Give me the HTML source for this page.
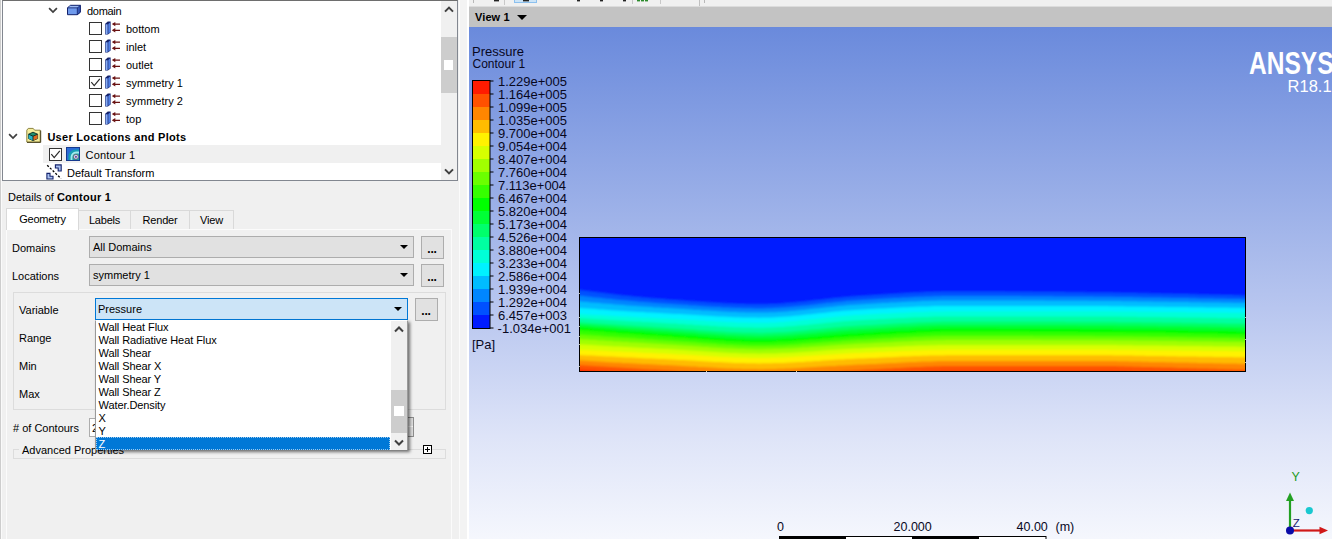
<!DOCTYPE html>
<html lang="en">
<head>
<meta charset="utf-8">
<title>CFD-Post - Contour 1</title>
<style>
*{box-sizing:border-box;margin:0;padding:0}
html,body{width:1332px;height:539px;overflow:hidden;background:#f0f0f0}
body{position:relative;font-family:"Liberation Sans",sans-serif;font-size:11px;color:#000;line-height:13px}
.abs{position:absolute}
.t{position:absolute;white-space:nowrap;line-height:13px;height:13px}
.b{font-weight:bold;letter-spacing:.25px}
/* tree */
#tree{position:absolute;left:2px;top:0;width:456px;height:181px;background:#fff;border:1px solid #828790;border-top-color:#6e6e6e}
.cb{position:absolute;width:13px;height:13px;border:1px solid #333;background:#fff}
.row-hl{position:absolute;left:43px;top:146px;width:397px;height:17px;background:#f0f0f0}
.sb{position:absolute;background:#f0f0f0}
.thumb{position:absolute;background:#cdcdcd}
/* details */
.tab{letter-spacing:-.2px;position:absolute;top:210px;height:19px;border:1px solid #d9d9d9;border-bottom:none;background:#f0f0f0;text-align:center;line-height:19px}
.tab.on{top:208px;height:22px;background:#fff;line-height:20px;z-index:2}
.combo{position:absolute;height:22px;background:#e1e1e1;border:1px solid #adadad;line-height:21px;padding-left:3px}
.btn{position:absolute;width:23px;height:23px;background:#e1e1e1;border:1px solid #adadad;text-align:center;line-height:24px;font-size:12px;font-weight:bold;letter-spacing:-.2px;padding-right:1px}
.arr{position:absolute;width:0;height:0;border-left:4px solid transparent;border-right:4px solid transparent;border-top:4px solid #000}
.grp{position:absolute;border:1px solid #dcdcdc}
.li{position:absolute;left:2.5px;letter-spacing:-.08px;white-space:nowrap;line-height:13px;height:13px}
</style>
</head>
<body>

<!-- ============ LEFT: outline tree ============ -->
<div id="tree"></div>
<div class="abs" style="left:0;top:0;width:460px;height:182px">
<div class="sb" style="left:441px;top:1px;width:16px;height:179px"></div>
<div class="thumb" style="left:441px;top:37px;width:16px;height:56px"></div>
<div class="abs" style="left:444px;top:60px;width:9px;height:10px;background:#fff"></div>
<svg class="abs" style="left:444px;top:6px" width="10" height="7" viewBox="0 0 10 7"><path d="M1 5.6 L5 1.6 L9 5.6" fill="none" stroke="#404040" stroke-width="2"/></svg>
<svg class="abs" style="left:444px;top:168px" width="10" height="7" viewBox="0 0 10 7"><path d="M1 1.4 L5 5.4 L9 1.4" fill="none" stroke="#404040" stroke-width="2"/></svg>
<div class="abs" style="left:43px;top:145px;width:398px;height:18px;background:#f0f0f0"></div>
<svg class="abs" style="left:47.7px;top:6.5px" width="10" height="7" viewBox="0 0 10 7"><path d="M1.1 1.1 L5 5 L8.9 1.1" fill="none" stroke="#404040" stroke-width="1.7"/></svg>
<svg class="abs" style="left:66px;top:4px" width="16" height="12" viewBox="0 0 16 12"><path d="M1.5 3.8 L4.5 1.3 H14.3 V8.2 L11.3 10.7 H1.5Z" fill="#6f9aec" stroke="#13226b" stroke-width="1" stroke-linejoin="round"/><path d="M11.3 3.8 L14.3 1.3 V8.2 L11.3 10.7Z" fill="#3558b8" stroke="#13226b" stroke-width=".8"/><path d="M1.5 3.8 H11.3" stroke="#13226b" stroke-width="1"/><path d="M2.2 3.2 L4.7 1.9 H13 L11 3.2Z" fill="#9dbcf5"/></svg>
<div class="t" style="left:87px;top:5px;letter-spacing:-.3px">domain</div>
<div class="cb" style="left:89px;top:22px"></div>
<svg class="abs" style="left:104px;top:21px" width="18" height="15" viewBox="0 0 18 15"><path d="M1.2 2.8 L3.8 .6 H6.6 V11.6 L3.9 13.6 H1.2Z" fill="#13226b"/><path d="M1.7 3.3 H3.6 V13.1 H1.7Z" fill="#86adf8"/><path d="M4.3 3 L6.1 1.5 V11.3 L4.3 12.7Z" fill="#4f7fe4"/><path d="M9.5 3.1 H16 M9.5 9.3 H16" stroke="#6a1212" stroke-width="1.2" fill="none"/><path d="M7.8 3.1 L11.3 .9 V5.3Z M7.8 9.3 L11.3 7.1 V11.5Z" fill="#6a1212"/></svg>
<div class="t" style="left:126px;top:23px">bottom</div>
<div class="cb" style="left:89px;top:40px"></div>
<svg class="abs" style="left:104px;top:39px" width="18" height="15" viewBox="0 0 18 15"><path d="M1.2 2.8 L3.8 .6 H6.6 V11.6 L3.9 13.6 H1.2Z" fill="#13226b"/><path d="M1.7 3.3 H3.6 V13.1 H1.7Z" fill="#86adf8"/><path d="M4.3 3 L6.1 1.5 V11.3 L4.3 12.7Z" fill="#4f7fe4"/><path d="M9.5 3.1 H16 M9.5 9.3 H16" stroke="#6a1212" stroke-width="1.2" fill="none"/><path d="M7.8 3.1 L11.3 .9 V5.3Z M7.8 9.3 L11.3 7.1 V11.5Z" fill="#6a1212"/></svg>
<div class="t" style="left:126px;top:41px">inlet</div>
<div class="cb" style="left:89px;top:58px"></div>
<svg class="abs" style="left:104px;top:57px" width="18" height="15" viewBox="0 0 18 15"><path d="M1.2 2.8 L3.8 .6 H6.6 V11.6 L3.9 13.6 H1.2Z" fill="#13226b"/><path d="M1.7 3.3 H3.6 V13.1 H1.7Z" fill="#86adf8"/><path d="M4.3 3 L6.1 1.5 V11.3 L4.3 12.7Z" fill="#4f7fe4"/><path d="M9.5 3.1 H16 M9.5 9.3 H16" stroke="#6a1212" stroke-width="1.2" fill="none"/><path d="M7.8 3.1 L11.3 .9 V5.3Z M7.8 9.3 L11.3 7.1 V11.5Z" fill="#6a1212"/></svg>
<div class="t" style="left:126px;top:59px">outlet</div>
<div class="cb" style="left:89px;top:76px"><svg width="11" height="11" viewBox="0 0 11 11" style="display:block"><path d="M1.3 5.2 L4.2 8.6 L9.8 1.8" fill="none" stroke="#2a2a2a" stroke-width="1.2"/></svg></div>
<svg class="abs" style="left:104px;top:75px" width="18" height="15" viewBox="0 0 18 15"><path d="M1.2 2.8 L3.8 .6 H6.6 V11.6 L3.9 13.6 H1.2Z" fill="#13226b"/><path d="M1.7 3.3 H3.6 V13.1 H1.7Z" fill="#86adf8"/><path d="M4.3 3 L6.1 1.5 V11.3 L4.3 12.7Z" fill="#4f7fe4"/><path d="M9.5 3.1 H16 M9.5 9.3 H16" stroke="#6a1212" stroke-width="1.2" fill="none"/><path d="M7.8 3.1 L11.3 .9 V5.3Z M7.8 9.3 L11.3 7.1 V11.5Z" fill="#6a1212"/></svg>
<div class="t" style="left:126px;top:77px">symmetry 1</div>
<div class="cb" style="left:89px;top:94px"></div>
<svg class="abs" style="left:104px;top:93px" width="18" height="15" viewBox="0 0 18 15"><path d="M1.2 2.8 L3.8 .6 H6.6 V11.6 L3.9 13.6 H1.2Z" fill="#13226b"/><path d="M1.7 3.3 H3.6 V13.1 H1.7Z" fill="#86adf8"/><path d="M4.3 3 L6.1 1.5 V11.3 L4.3 12.7Z" fill="#4f7fe4"/><path d="M9.5 3.1 H16 M9.5 9.3 H16" stroke="#6a1212" stroke-width="1.2" fill="none"/><path d="M7.8 3.1 L11.3 .9 V5.3Z M7.8 9.3 L11.3 7.1 V11.5Z" fill="#6a1212"/></svg>
<div class="t" style="left:126px;top:95px">symmetry 2</div>
<div class="cb" style="left:89px;top:112px"></div>
<svg class="abs" style="left:104px;top:111px" width="18" height="15" viewBox="0 0 18 15"><path d="M1.2 2.8 L3.8 .6 H6.6 V11.6 L3.9 13.6 H1.2Z" fill="#13226b"/><path d="M1.7 3.3 H3.6 V13.1 H1.7Z" fill="#86adf8"/><path d="M4.3 3 L6.1 1.5 V11.3 L4.3 12.7Z" fill="#4f7fe4"/><path d="M9.5 3.1 H16 M9.5 9.3 H16" stroke="#6a1212" stroke-width="1.2" fill="none"/><path d="M7.8 3.1 L11.3 .9 V5.3Z M7.8 9.3 L11.3 7.1 V11.5Z" fill="#6a1212"/></svg>
<div class="t" style="left:126px;top:113px">top</div>
<svg class="abs" style="left:7.8px;top:132.5px" width="10" height="7" viewBox="0 0 10 7"><path d="M1.1 1.1 L5 5 L8.9 1.1" fill="none" stroke="#404040" stroke-width="1.7"/></svg>
<svg class="abs" style="left:26px;top:127px" width="16" height="17" viewBox="0 0 16 17"><path d="M.8 3.2 L2.2 1.4 H7.2 L8.6 3.2 H14.2 V15 H.8Z" fill="#f6ee9c" stroke="#8c8440" stroke-width="1"/><path d="M1 15.4 H14.7 V3.6" fill="none" stroke="#4a4420" stroke-width="1"/><path d="M2.6 7.2 L7 5.2 L11.6 7.2 V11.6 L7 13.6 L2.6 11.6Z" fill="#1f8f70" stroke="#0c2a22" stroke-width=".9"/><path d="M7 9.2 L11.6 7.2 V11.6 L7 13.6Z" fill="#e06a20"/><path d="M2.6 7.2 L7 9.2 V13.6 L2.6 11.6Z" fill="#28b4c8"/><path d="M2.6 7.2 L7 9.2 L11.6 7.2 M7 9.2 V13.6" fill="none" stroke="#0c2a22" stroke-width=".9"/></svg>
<div class="t b" style="left:47.4px;top:131px;letter-spacing:.29px">User Locations and Plots</div>
<div class="cb" style="left:49px;top:148px"><svg width="11" height="11" viewBox="0 0 11 11" style="display:block"><path d="M1.3 5.2 L4.2 8.6 L9.8 1.8" fill="none" stroke="#2a2a2a" stroke-width="1.2"/></svg></div>
<svg class="abs" style="left:66px;top:147px" width="14" height="14" viewBox="0 0 14 14"><rect x=".5" y=".5" width="13" height="13" fill="#2b6cd6" stroke="#163a8e"/><path d="M2.4 13 V9.6 A7.2 7.2 0 0 1 9.6 2.4 H13 V13Z" fill="#179fb4"/><path d="M4.6 13 V10 A5.4 5.4 0 0 1 10 4.6 H13 V13Z" fill="#a4ecec"/><path d="M6.4 13 V10.4 A4 4 0 0 1 10.4 6.4 H13 V13Z" fill="#1da2a8"/><circle cx="9.9" cy="9.8" r="2.5" fill="#dcdfe8" stroke="#55586a" stroke-width=".8"/><circle cx="9.9" cy="9.8" r="1.1" fill="#6a48b0"/></svg>
<div class="t" style="left:85.6px;top:149px;letter-spacing:.15px">Contour 1</div>
<svg class="abs" style="left:46px;top:164px" width="17" height="16" viewBox="0 0 17 16"><path d="M9.4 .9 H15.2 V7 H12.2 V4 H9.4Z" fill="#a9c0f0" stroke="#13226b" stroke-width="1.1"/><path d="M.9 9.4 H4 V12.2 H7 V15 H.9Z" fill="#a9c0f0" stroke="#13226b" stroke-width="1.1"/><path d="M1.2 1.2 L15 14.6" stroke="#000" stroke-width="1.3" stroke-dasharray="2.2 1.6"/></svg>
<div class="t" style="left:67px;top:167px">Default Transform</div>
</div>


<!-- ============ LEFT: details ============ -->
<div class="abs" style="left:0;top:0;width:1px;height:539px;background:#cdcdcd"></div>
<div class="abs" style="left:1px;top:0;width:1px;height:539px;background:#fafafa"></div>
<div class="abs" style="left:459px;top:0;width:1px;height:539px;background:#fbfbfb"></div>
<div class="abs" style="left:460px;top:0;width:7px;height:539px;background:#f3f3f3"></div>
<div class="abs" style="left:467px;top:0;width:2px;height:539px;background:#fff"></div>
<div class="t" style="left:8px;top:191px">Details of <span class="b">Contour 1</span></div>

<!-- tab pane -->
<div class="abs" style="left:6px;top:229px;width:446px;height:320px;border:1px solid #fbfbfb"></div>
<div class="tab on" style="left:6px;width:73px">Geometry</div>
<div class="tab" style="left:78px;width:53px">Labels</div>
<div class="tab" style="left:130px;width:60px">Render</div>
<div class="tab" style="left:189px;width:45px">View</div>

<div class="t" style="left:12px;top:242px">Domains</div>
<div class="combo" style="left:89px;top:236px;width:325px">All Domains</div>
<div class="arr" style="left:400px;top:245px"></div>
<div class="btn" style="left:421px;top:236px">...</div>

<div class="t" style="left:12px;top:270px">Locations</div>
<div class="combo" style="left:89px;top:264px;width:325px">symmetry 1</div>
<div class="arr" style="left:400px;top:273px"></div>
<div class="btn" style="left:421px;top:264px">...</div>

<div class="grp" style="left:13px;top:292px;width:433px;height:118px"></div>
<div class="t" style="left:19px;top:304px">Variable</div>
<div class="t" style="left:19px;top:332px">Range</div>
<div class="t" style="left:19px;top:360px">Min</div>
<div class="t" style="left:19px;top:388px">Max</div>
<div class="combo" style="left:95px;top:298px;width:313px;background:#cce4f7;border-color:#0078d7;padding-left:2px">Pressure</div>
<div class="arr" style="left:394px;top:307px"></div>
<div class="btn" style="left:415px;top:298px">...</div>

<div class="t" style="left:13px;top:422px"># of Contours</div>
<div class="abs" style="left:89px;top:418px;width:325px;height:19px;background:#fff;border:1px solid #adadad"></div>
<div class="abs" style="left:407px;top:417px;width:7px;height:20px;background:#dedede;border:1px solid #8c8c8c"></div>
<div class="abs" style="left:408px;top:426px;width:5px;height:1px;background:#f6f6f6"></div>
<div class="t" style="left:92px;top:422px">20</div>

<div class="grp" style="left:13px;top:449px;width:433px;height:10px"></div>
<div class="t" style="left:19px;top:444px;background:#f0f0f0;padding:0 3px">Advanced Properties</div>
<div class="abs" style="left:423px;top:445px;width:9px;height:9px;border:1px solid #000;background:#fff"></div>
<div class="abs" style="left:425px;top:449px;width:5px;height:1px;background:#000"></div>
<div class="abs" style="left:427px;top:447px;width:1px;height:5px;background:#000"></div>

<!-- dropdown list -->
<div class="abs" style="left:95px;top:320px;width:313px;height:130px;background:#fff;border:1px solid #9a9a9a;border-top-color:#fff;border-bottom:none;box-shadow:2px 2px 3px rgba(0,0,0,.55);z-index:5">
  <div class="li" style="top:0px">Wall Heat Flux</div>
  <div class="li" style="top:13px">Wall Radiative Heat Flux</div>
  <div class="li" style="top:26px">Wall Shear</div>
  <div class="li" style="top:39px">Wall Shear X</div>
  <div class="li" style="top:52px">Wall Shear Y</div>
  <div class="li" style="top:65px">Wall Shear Z</div>
  <div class="li" style="top:78px">Water.Density</div>
  <div class="li" style="top:91px">X</div>
  <div class="li" style="top:104px">Y</div>
  <div class="abs" style="left:0;top:116px;width:294px;height:13px;background:#0078d7;outline:1px dotted #9ccbf0;outline-offset:-1px"></div>
  <div class="li" style="top:117px;color:#fff">Z</div>
  <div class="sb" style="left:295px;top:0;width:16px;height:129px"></div>
  <div class="thumb" style="left:295px;top:69px;width:16px;height:43px"></div>
  <div class="abs" style="left:298px;top:85px;width:10px;height:10px;background:#fff"></div>
  <svg class="abs" style="left:298px;top:5px" width="10" height="7" viewBox="0 0 10 7"><path d="M1 5.5 L5 1.5 L9 5.5" fill="none" stroke="#404040" stroke-width="2"/></svg>
  <svg class="abs" style="left:298px;top:118px" width="10" height="7" viewBox="0 0 10 7"><path d="M1 1.5 L5 5.5 L9 1.5" fill="none" stroke="#404040" stroke-width="2"/></svg>
</div>

<!-- ============ RIGHT: viewer ============ -->
<!--VIEWER-START-->
<div class="abs" style="left:469px;top:6px;width:863px;height:1px;background:#dcdcdc"></div>
<div class="abs" style="left:469px;top:7px;width:863px;height:20px;background:#c3c3c3"></div>
<div class="t b" style="left:475px;top:11px;letter-spacing:.1px">View 1</div>
<div class="arr" style="left:517px;top:15px;border-left-width:5px;border-right-width:5px;border-top-width:5px"></div>
<svg class="abs" style="left:469px;top:27px" width="863" height="512" viewBox="469 27 863 512" font-family="Liberation Sans, sans-serif">
<defs><linearGradient id="bg" x1="0" y1="0" x2="0" y2="1"><stop offset="0" stop-color="#6a8adc"/><stop offset=".55" stop-color="#b8c6ef"/><stop offset=".8" stop-color="#dee4f8"/><stop offset="1" stop-color="#f5f7fd"/></linearGradient><clipPath id="pc"><rect x="580" y="238" width="665" height="133"/></clipPath><filter id="bl" x="-2%" y="-10%" width="104%" height="120%"><feGaussianBlur stdDeviation="0.6 1.0"/></filter></defs>
<rect x="469" y="27" width="863" height="512" fill="url(#bg)"/>
<text x="472" y="55.9" font-size="13" fill="#08081e">Pressure</text>
<text x="472.5" y="68" font-size="12" fill="#08081e">Contour 1</text>
<rect x="473" y="81" width="17" height="13" fill="#ff1b00"/>
<rect x="473" y="94" width="17" height="13" fill="#ff5100"/>
<rect x="473" y="107" width="17" height="13" fill="#ff8600"/>
<rect x="473" y="120" width="17" height="13" fill="#ffbc00"/>
<rect x="473" y="133" width="17" height="13" fill="#fff200"/>
<rect x="473" y="146" width="17" height="13" fill="#d7ff00"/>
<rect x="473" y="159" width="17" height="13" fill="#a1ff00"/>
<rect x="473" y="172" width="17" height="13" fill="#6bff00"/>
<rect x="473" y="185" width="17" height="13" fill="#36ff00"/>
<rect x="473" y="198" width="17" height="13" fill="#00ff00"/>
<rect x="473" y="211" width="17" height="13" fill="#00ff36"/>
<rect x="473" y="224" width="17" height="13" fill="#00ff6b"/>
<rect x="473" y="237" width="17" height="13" fill="#00ffa1"/>
<rect x="473" y="250" width="17" height="13" fill="#00ffd7"/>
<rect x="473" y="263" width="17" height="13" fill="#00f2ff"/>
<rect x="473" y="276" width="17" height="13" fill="#00bcff"/>
<rect x="473" y="289" width="17" height="13" fill="#0086ff"/>
<rect x="473" y="302" width="17" height="13" fill="#0051ff"/>
<rect x="473" y="315" width="17" height="13" fill="#001bff"/>
<rect x="472.5" y="80.5" width="17.5" height="248" fill="none" stroke="#000" stroke-width="1"/>
<rect x="490" y="80.5" width="3.5" height="1" fill="#000"/>
<text x="498" y="85.7" font-size="13" fill="#08081e">1.229e+005</text>
<rect x="490" y="93.5" width="3.5" height="1" fill="#000"/>
<text x="498" y="98.7" font-size="13" fill="#08081e">1.164e+005</text>
<rect x="490" y="106.5" width="3.5" height="1" fill="#000"/>
<text x="498" y="111.7" font-size="13" fill="#08081e">1.099e+005</text>
<rect x="490" y="119.5" width="3.5" height="1" fill="#000"/>
<text x="498" y="124.7" font-size="13" fill="#08081e">1.035e+005</text>
<rect x="490" y="132.5" width="3.5" height="1" fill="#000"/>
<text x="498" y="137.7" font-size="13" fill="#08081e">9.700e+004</text>
<rect x="490" y="145.5" width="3.5" height="1" fill="#000"/>
<text x="498" y="150.7" font-size="13" fill="#08081e">9.054e+004</text>
<rect x="490" y="158.5" width="3.5" height="1" fill="#000"/>
<text x="498" y="163.7" font-size="13" fill="#08081e">8.407e+004</text>
<rect x="490" y="171.5" width="3.5" height="1" fill="#000"/>
<text x="498" y="176.7" font-size="13" fill="#08081e">7.760e+004</text>
<rect x="490" y="184.5" width="3.5" height="1" fill="#000"/>
<text x="498" y="189.7" font-size="13" fill="#08081e">7.113e+004</text>
<rect x="490" y="197.5" width="3.5" height="1" fill="#000"/>
<text x="498" y="202.7" font-size="13" fill="#08081e">6.467e+004</text>
<rect x="490" y="210.5" width="3.5" height="1" fill="#000"/>
<text x="498" y="215.7" font-size="13" fill="#08081e">5.820e+004</text>
<rect x="490" y="223.5" width="3.5" height="1" fill="#000"/>
<text x="498" y="228.7" font-size="13" fill="#08081e">5.173e+004</text>
<rect x="490" y="236.5" width="3.5" height="1" fill="#000"/>
<text x="498" y="241.7" font-size="13" fill="#08081e">4.526e+004</text>
<rect x="490" y="249.5" width="3.5" height="1" fill="#000"/>
<text x="498" y="254.7" font-size="13" fill="#08081e">3.880e+004</text>
<rect x="490" y="262.5" width="3.5" height="1" fill="#000"/>
<text x="498" y="267.7" font-size="13" fill="#08081e">3.233e+004</text>
<rect x="490" y="275.5" width="3.5" height="1" fill="#000"/>
<text x="498" y="280.7" font-size="13" fill="#08081e">2.586e+004</text>
<rect x="490" y="288.5" width="3.5" height="1" fill="#000"/>
<text x="498" y="293.7" font-size="13" fill="#08081e">1.939e+004</text>
<rect x="490" y="301.5" width="3.5" height="1" fill="#000"/>
<text x="498" y="306.7" font-size="13" fill="#08081e">1.292e+004</text>
<rect x="490" y="314.5" width="3.5" height="1" fill="#000"/>
<text x="498" y="319.7" font-size="13" fill="#08081e">6.457e+003</text>
<rect x="490" y="327.5" width="3.5" height="1" fill="#000"/>
<text x="497.6" y="332.7" font-size="13" fill="#08081e">-1.034e+001</text>
<text x="472" y="349" font-size="13" fill="#08081e">[Pa]</text>
<g clip-path="url(#pc)"><g filter="url(#bl)">
<rect x="560" y="220" width="700" height="170" fill="#001bff"/>
<polygon fill="#0051ff" points="560,290.0 579,290.0 583,290.5 587,291.1 591,291.6 595,292.1 599,292.6 603,293.1 607,293.6 611,294.0 615,294.5 619,295.0 623,295.4 627,295.8 631,296.3 635,296.7 639,297.1 643,297.4 647,297.8 651,298.2 655,298.5 659,298.8 663,299.1 667,299.4 671,299.7 675,300.0 679,300.3 683,300.6 687,300.9 691,301.2 695,301.4 699,301.7 703,302.0 707,302.3 711,302.5 715,302.8 719,303.0 723,303.2 727,303.4 731,303.6 735,303.8 739,303.9 743,304.0 747,304.2 751,304.2 755,304.3 759,304.3 763,304.3 767,304.2 771,304.1 775,303.9 779,303.7 783,303.4 787,303.1 791,302.8 795,302.4 799,302.1 803,301.7 807,301.2 811,300.8 815,300.3 819,299.9 823,299.5 827,299.0 831,298.6 835,298.1 839,297.7 843,297.3 847,297.0 851,296.6 855,296.3 859,296.1 863,295.8 867,295.6 871,295.3 875,295.1 879,294.8 883,294.5 887,294.3 891,294.0 895,293.8 899,293.5 903,293.3 907,293.1 911,292.8 915,292.6 919,292.4 923,292.3 927,292.1 931,291.9 935,291.8 939,291.7 943,291.6 947,291.6 951,291.5 955,291.5 959,291.5 963,291.5 967,291.5 971,291.5 975,291.5 979,291.5 983,291.6 987,291.6 991,291.6 995,291.6 999,291.6 1003,291.6 1007,291.7 1011,291.7 1015,291.7 1019,291.7 1023,291.8 1027,291.8 1031,291.8 1035,291.9 1039,291.9 1043,291.9 1047,292.0 1051,292.0 1055,292.0 1059,292.1 1063,292.1 1067,292.2 1071,292.2 1075,292.2 1079,292.3 1083,292.3 1087,292.4 1091,292.4 1095,292.4 1099,292.5 1103,292.5 1107,292.6 1111,292.6 1115,292.7 1119,292.8 1123,292.9 1127,292.9 1131,293.0 1135,293.1 1139,293.2 1143,293.3 1147,293.3 1151,293.4 1155,293.5 1159,293.6 1163,293.7 1167,293.7 1171,293.8 1175,293.9 1179,294.0 1183,294.1 1187,294.1 1191,294.2 1195,294.3 1199,294.4 1203,294.5 1207,294.6 1211,294.7 1215,294.8 1219,294.8 1223,294.9 1227,295.0 1231,295.1 1235,295.2 1239,295.3 1243,295.4 1247,295.5 1262,295.5 1262,395 560,395"/>
<polygon fill="#0086ff" points="560,295.7 579,295.7 583,296.1 587,296.6 591,297.0 595,297.4 599,297.8 603,298.3 607,298.7 611,299.1 615,299.5 619,299.9 623,300.2 627,300.6 631,301.0 635,301.3 639,301.7 643,302.0 647,302.3 651,302.6 655,302.9 659,303.2 663,303.5 667,303.8 671,304.0 675,304.3 679,304.6 683,304.8 687,305.1 691,305.4 695,305.6 699,305.9 703,306.2 707,306.4 711,306.7 715,306.9 719,307.1 723,307.4 727,307.6 731,307.7 735,307.9 739,308.0 743,308.2 747,308.3 751,308.3 755,308.4 759,308.4 763,308.4 767,308.3 771,308.2 775,308.0 779,307.8 783,307.5 787,307.3 791,306.9 795,306.6 799,306.2 803,305.8 807,305.4 811,304.9 815,304.5 819,304.0 823,303.6 827,303.1 831,302.7 835,302.3 839,301.9 843,301.5 847,301.1 851,300.8 855,300.5 859,300.3 863,300.0 867,299.8 871,299.5 875,299.3 879,299.1 883,298.8 887,298.6 891,298.3 895,298.1 899,297.9 903,297.6 907,297.4 911,297.2 915,297.0 919,296.8 923,296.7 927,296.5 931,296.4 935,296.3 939,296.2 943,296.1 947,296.0 951,296.0 955,296.0 959,296.0 963,296.0 967,296.0 971,296.0 975,296.0 979,296.0 983,296.0 987,296.0 991,296.0 995,296.0 999,296.1 1003,296.1 1007,296.1 1011,296.1 1015,296.1 1019,296.1 1023,296.2 1027,296.2 1031,296.2 1035,296.2 1039,296.3 1043,296.3 1047,296.3 1051,296.3 1055,296.4 1059,296.4 1063,296.4 1067,296.4 1071,296.5 1075,296.5 1079,296.5 1083,296.6 1087,296.6 1091,296.6 1095,296.7 1099,296.7 1103,296.7 1107,296.8 1111,296.8 1115,296.9 1119,296.9 1123,297.0 1127,297.1 1131,297.1 1135,297.2 1139,297.3 1143,297.4 1147,297.4 1151,297.5 1155,297.6 1159,297.6 1163,297.7 1167,297.8 1171,297.9 1175,297.9 1179,298.0 1183,298.1 1187,298.1 1191,298.2 1195,298.3 1199,298.4 1203,298.4 1207,298.5 1211,298.6 1215,298.7 1219,298.7 1223,298.8 1227,298.9 1231,299.0 1235,299.1 1239,299.1 1243,299.2 1247,299.3 1262,299.3 1262,395 560,395"/>
<polygon fill="#00bcff" points="560,301.3 579,301.3 583,301.7 587,302.1 591,302.4 595,302.8 599,303.1 603,303.5 607,303.8 611,304.1 615,304.4 619,304.8 623,305.1 627,305.4 631,305.7 635,306.0 639,306.3 643,306.6 647,306.8 651,307.1 655,307.4 659,307.6 663,307.9 667,308.1 671,308.3 675,308.6 679,308.8 683,309.1 687,309.3 691,309.6 695,309.9 699,310.1 703,310.4 707,310.6 711,310.8 715,311.1 719,311.3 723,311.5 727,311.7 731,311.9 735,312.0 739,312.2 743,312.3 747,312.4 751,312.5 755,312.5 759,312.5 763,312.5 767,312.5 771,312.3 775,312.2 779,311.9 783,311.7 787,311.4 791,311.0 795,310.7 799,310.3 803,309.9 807,309.5 811,309.0 815,308.6 819,308.2 823,307.7 827,307.3 831,306.9 835,306.4 839,306.0 843,305.7 847,305.3 851,305.0 855,304.7 859,304.5 863,304.2 867,304.0 871,303.8 875,303.6 879,303.3 883,303.1 887,302.9 891,302.6 895,302.4 899,302.2 903,302.0 907,301.8 911,301.6 915,301.4 919,301.2 923,301.1 927,300.9 931,300.8 935,300.7 939,300.6 943,300.5 947,300.5 951,300.4 955,300.4 959,300.4 963,300.4 967,300.4 971,300.4 975,300.4 979,300.5 983,300.5 987,300.5 991,300.5 995,300.5 999,300.5 1003,300.5 1007,300.5 1011,300.5 1015,300.5 1019,300.5 1023,300.6 1027,300.6 1031,300.6 1035,300.6 1039,300.6 1043,300.6 1047,300.7 1051,300.7 1055,300.7 1059,300.7 1063,300.7 1067,300.7 1071,300.8 1075,300.8 1079,300.8 1083,300.8 1087,300.8 1091,300.9 1095,300.9 1099,300.9 1103,300.9 1107,301.0 1111,301.0 1115,301.0 1119,301.1 1123,301.2 1127,301.2 1131,301.3 1135,301.3 1139,301.4 1143,301.5 1147,301.5 1151,301.6 1155,301.7 1159,301.7 1163,301.8 1167,301.8 1171,301.9 1175,302.0 1179,302.0 1183,302.1 1187,302.1 1191,302.2 1195,302.3 1199,302.3 1203,302.4 1207,302.4 1211,302.5 1215,302.6 1219,302.6 1223,302.7 1227,302.8 1231,302.8 1235,302.9 1239,303.0 1243,303.0 1247,303.1 1262,303.1 1262,395 560,395"/>
<polygon fill="#00f2ff" points="560,308.0 579,308.0 583,308.3 587,308.6 591,308.8 595,309.1 599,309.4 603,309.6 607,309.9 611,310.2 615,310.4 619,310.7 623,310.9 627,311.2 631,311.4 635,311.7 639,311.9 643,312.1 647,312.4 651,312.6 655,312.8 659,313.0 663,313.2 667,313.4 671,313.7 675,313.9 679,314.1 683,314.3 687,314.6 691,314.8 695,315.1 699,315.3 703,315.5 707,315.8 711,316.0 715,316.2 719,316.4 723,316.6 727,316.8 731,317.0 735,317.2 739,317.3 743,317.4 747,317.5 751,317.6 755,317.6 759,317.7 763,317.6 767,317.6 771,317.4 775,317.3 779,317.1 783,316.8 787,316.5 791,316.2 795,315.8 799,315.4 803,315.0 807,314.6 811,314.2 815,313.7 819,313.3 823,312.9 827,312.4 831,312.0 835,311.6 839,311.2 843,310.8 847,310.5 851,310.2 855,309.9 859,309.7 863,309.4 867,309.2 871,309.0 875,308.8 879,308.6 883,308.4 887,308.2 891,307.9 895,307.7 899,307.5 903,307.3 907,307.2 911,307.0 915,306.8 919,306.6 923,306.5 927,306.4 931,306.3 935,306.1 939,306.1 943,306.0 947,305.9 951,305.9 955,305.9 959,305.9 963,305.9 967,305.9 971,305.9 975,305.9 979,305.9 983,305.9 987,305.9 991,305.9 995,305.9 999,305.9 1003,305.9 1007,305.9 1011,305.9 1015,305.9 1019,305.9 1023,306.0 1027,306.0 1031,306.0 1035,306.0 1039,306.0 1043,306.0 1047,306.0 1051,306.0 1055,306.0 1059,306.0 1063,306.0 1067,306.0 1071,306.0 1075,306.0 1079,306.1 1083,306.1 1087,306.1 1091,306.1 1095,306.1 1099,306.1 1103,306.1 1107,306.1 1111,306.2 1115,306.2 1119,306.2 1123,306.3 1127,306.4 1131,306.4 1135,306.5 1139,306.5 1143,306.6 1147,306.6 1151,306.7 1155,306.7 1159,306.8 1163,306.8 1167,306.9 1171,306.9 1175,307.0 1179,307.0 1183,307.1 1187,307.1 1191,307.2 1195,307.2 1199,307.3 1203,307.3 1207,307.4 1211,307.4 1215,307.5 1219,307.5 1223,307.6 1227,307.6 1231,307.7 1235,307.7 1239,307.8 1243,307.8 1247,307.9 1262,307.9 1262,395 560,395"/>
<polygon fill="#00ffd7" points="560,314.0 579,314.0 583,314.2 587,314.5 591,314.7 595,314.9 599,315.1 603,315.3 607,315.5 611,315.8 615,316.0 619,316.2 623,316.4 627,316.6 631,316.8 635,317.0 639,317.2 643,317.4 647,317.6 651,317.8 655,318.0 659,318.2 663,318.4 667,318.6 671,318.8 675,319.0 679,319.2 683,319.4 687,319.7 691,319.9 695,320.1 699,320.4 703,320.6 707,320.9 711,321.1 715,321.3 719,321.5 723,321.7 727,321.9 731,322.1 735,322.2 739,322.4 743,322.5 747,322.6 751,322.7 755,322.7 759,322.7 763,322.7 767,322.7 771,322.5 775,322.4 779,322.1 783,321.9 787,321.6 791,321.3 795,320.9 799,320.5 803,320.1 807,319.7 811,319.3 815,318.9 819,318.4 823,318.0 827,317.6 831,317.2 835,316.8 839,316.4 843,316.0 847,315.7 851,315.4 855,315.1 859,314.9 863,314.7 867,314.5 871,314.3 875,314.1 879,313.8 883,313.6 887,313.4 891,313.2 895,313.0 899,312.8 903,312.7 907,312.5 911,312.3 915,312.1 919,312.0 923,311.9 927,311.7 931,311.6 935,311.5 939,311.4 943,311.4 947,311.3 951,311.3 955,311.3 959,311.3 963,311.3 967,311.3 971,311.3 975,311.3 979,311.3 983,311.3 987,311.3 991,311.3 995,311.3 999,311.3 1003,311.3 1007,311.3 1011,311.3 1015,311.3 1019,311.3 1023,311.3 1027,311.3 1031,311.3 1035,311.3 1039,311.3 1043,311.3 1047,311.3 1051,311.3 1055,311.3 1059,311.3 1063,311.3 1067,311.3 1071,311.3 1075,311.3 1079,311.3 1083,311.3 1087,311.3 1091,311.3 1095,311.3 1099,311.3 1103,311.3 1107,311.3 1111,311.3 1115,311.4 1119,311.4 1123,311.5 1127,311.5 1131,311.6 1135,311.6 1139,311.7 1143,311.7 1147,311.8 1151,311.8 1155,311.9 1159,311.9 1163,311.9 1167,312.0 1171,312.0 1175,312.1 1179,312.1 1183,312.1 1187,312.2 1191,312.2 1195,312.3 1199,312.3 1203,312.4 1207,312.4 1211,312.5 1215,312.5 1219,312.5 1223,312.6 1227,312.6 1231,312.7 1235,312.7 1239,312.8 1243,312.8 1247,312.9 1262,312.9 1262,395 560,395"/>
<polygon fill="#00ffa1" points="560,318.1 579,318.1 583,318.3 587,318.6 591,318.8 595,319.1 599,319.3 603,319.5 607,319.8 611,320.0 615,320.3 619,320.5 623,320.7 627,321.0 631,321.2 635,321.4 639,321.6 643,321.9 647,322.1 651,322.3 655,322.5 659,322.7 663,323.0 667,323.2 671,323.4 675,323.6 679,323.9 683,324.1 687,324.4 691,324.6 695,324.9 699,325.1 703,325.4 707,325.6 711,325.9 715,326.1 719,326.4 723,326.6 727,326.8 731,327.0 735,327.2 739,327.3 743,327.4 747,327.5 751,327.6 755,327.7 759,327.7 763,327.7 767,327.6 771,327.5 775,327.3 779,327.1 783,326.9 787,326.6 791,326.3 795,326.0 799,325.6 803,325.3 807,324.9 811,324.5 815,324.1 819,323.7 823,323.2 827,322.8 831,322.4 835,322.1 839,321.7 843,321.3 847,321.0 851,320.7 855,320.4 859,320.2 863,320.0 867,319.8 871,319.6 875,319.4 879,319.1 883,318.9 887,318.7 891,318.5 895,318.3 899,318.1 903,317.9 907,317.7 911,317.5 915,317.3 919,317.2 923,317.0 927,316.9 931,316.8 935,316.6 939,316.6 943,316.5 947,316.4 951,316.4 955,316.4 959,316.4 963,316.4 967,316.4 971,316.4 975,316.4 979,316.4 983,316.4 987,316.4 991,316.4 995,316.4 999,316.4 1003,316.4 1007,316.4 1011,316.4 1015,316.4 1019,316.4 1023,316.4 1027,316.4 1031,316.4 1035,316.4 1039,316.4 1043,316.4 1047,316.4 1051,316.5 1055,316.5 1059,316.5 1063,316.5 1067,316.5 1071,316.5 1075,316.5 1079,316.5 1083,316.5 1087,316.5 1091,316.5 1095,316.5 1099,316.5 1103,316.5 1107,316.5 1111,316.6 1115,316.6 1119,316.6 1123,316.7 1127,316.7 1131,316.8 1135,316.8 1139,316.9 1143,316.9 1147,317.0 1151,317.0 1155,317.1 1159,317.1 1163,317.2 1167,317.2 1171,317.3 1175,317.3 1179,317.4 1183,317.4 1187,317.5 1191,317.5 1195,317.6 1199,317.6 1203,317.7 1207,317.7 1211,317.8 1215,317.8 1219,317.9 1223,317.9 1227,318.0 1231,318.0 1235,318.1 1239,318.2 1243,318.2 1247,318.3 1262,318.3 1262,395 560,395"/>
<polygon fill="#00ff6b" points="560,322.1 579,322.1 583,322.4 587,322.7 591,323.0 595,323.2 599,323.5 603,323.8 607,324.0 611,324.3 615,324.6 619,324.8 623,325.1 627,325.3 631,325.6 635,325.8 639,326.1 643,326.3 647,326.6 651,326.8 655,327.1 659,327.3 663,327.5 667,327.8 671,328.0 675,328.2 679,328.5 683,328.8 687,329.0 691,329.3 695,329.6 699,329.9 703,330.2 707,330.4 711,330.7 715,331.0 719,331.2 723,331.5 727,331.7 731,331.9 735,332.1 739,332.2 743,332.4 747,332.5 751,332.6 755,332.6 759,332.7 763,332.7 767,332.6 771,332.5 775,332.3 779,332.1 783,331.9 787,331.7 791,331.4 795,331.1 799,330.7 803,330.4 807,330.0 811,329.6 815,329.2 819,328.9 823,328.5 827,328.1 831,327.7 835,327.3 839,327.0 843,326.6 847,326.3 851,326.0 855,325.8 859,325.5 863,325.3 867,325.1 871,324.9 875,324.7 879,324.4 883,324.2 887,324.0 891,323.7 895,323.5 899,323.3 903,323.1 907,322.9 911,322.7 915,322.5 919,322.3 923,322.2 927,322.0 931,321.9 935,321.8 939,321.7 943,321.6 947,321.5 951,321.5 955,321.5 959,321.5 963,321.5 967,321.5 971,321.5 975,321.5 979,321.5 983,321.5 987,321.5 991,321.5 995,321.5 999,321.5 1003,321.5 1007,321.5 1011,321.5 1015,321.5 1019,321.6 1023,321.6 1027,321.6 1031,321.6 1035,321.6 1039,321.6 1043,321.6 1047,321.6 1051,321.6 1055,321.6 1059,321.6 1063,321.6 1067,321.7 1071,321.7 1075,321.7 1079,321.7 1083,321.7 1087,321.7 1091,321.7 1095,321.7 1099,321.7 1103,321.7 1107,321.8 1111,321.8 1115,321.8 1119,321.9 1123,321.9 1127,322.0 1131,322.0 1135,322.1 1139,322.1 1143,322.2 1147,322.2 1151,322.2 1155,322.3 1159,322.3 1163,322.4 1167,322.4 1171,322.5 1175,322.5 1179,322.6 1183,322.7 1187,322.7 1191,322.8 1195,322.8 1199,322.9 1203,323.0 1207,323.0 1211,323.1 1215,323.1 1219,323.2 1223,323.3 1227,323.4 1231,323.4 1235,323.5 1239,323.6 1243,323.6 1247,323.7 1262,323.7 1262,395 560,395"/>
<polygon fill="#00ff36" points="560,324.5 579,324.5 583,324.8 587,325.1 591,325.4 595,325.7 599,326.0 603,326.3 607,326.6 611,326.8 615,327.1 619,327.4 623,327.7 627,328.0 631,328.3 635,328.5 639,328.8 643,329.1 647,329.3 651,329.6 655,329.9 659,330.1 663,330.4 667,330.6 671,330.9 675,331.2 679,331.4 683,331.7 687,332.0 691,332.3 695,332.6 699,332.9 703,333.2 707,333.5 711,333.8 715,334.1 719,334.4 723,334.6 727,334.9 731,335.1 735,335.3 739,335.5 743,335.6 747,335.7 751,335.8 755,335.9 759,335.9 763,335.9 767,335.8 771,335.7 775,335.6 779,335.4 783,335.2 787,335.0 791,334.7 795,334.4 799,334.1 803,333.8 807,333.4 811,333.1 815,332.7 819,332.3 823,332.0 827,331.6 831,331.2 835,330.9 839,330.6 843,330.2 847,329.9 851,329.6 855,329.4 859,329.1 863,328.9 867,328.7 871,328.5 875,328.2 879,328.0 883,327.8 887,327.5 891,327.3 895,327.1 899,326.8 903,326.6 907,326.4 911,326.2 915,326.0 919,325.8 923,325.6 927,325.5 931,325.3 935,325.2 939,325.1 943,325.0 947,325.0 951,324.9 955,324.9 959,324.9 963,324.9 967,324.9 971,324.9 975,324.9 979,324.9 983,324.9 987,324.9 991,324.9 995,324.9 999,324.9 1003,324.9 1007,325.0 1011,325.0 1015,325.0 1019,325.0 1023,325.0 1027,325.0 1031,325.0 1035,325.0 1039,325.0 1043,325.0 1047,325.1 1051,325.1 1055,325.1 1059,325.1 1063,325.1 1067,325.1 1071,325.1 1075,325.1 1079,325.2 1083,325.2 1087,325.2 1091,325.2 1095,325.2 1099,325.2 1103,325.3 1107,325.3 1111,325.3 1115,325.3 1119,325.4 1123,325.4 1127,325.5 1131,325.5 1135,325.6 1139,325.6 1143,325.7 1147,325.7 1151,325.8 1155,325.8 1159,325.9 1163,325.9 1167,326.0 1171,326.0 1175,326.1 1179,326.1 1183,326.2 1187,326.3 1191,326.3 1195,326.4 1199,326.5 1203,326.5 1207,326.6 1211,326.7 1215,326.8 1219,326.8 1223,326.9 1227,327.0 1231,327.1 1235,327.2 1239,327.3 1243,327.3 1247,327.4 1262,327.4 1262,395 560,395"/>
<polygon fill="#00ff00" points="560,326.8 579,326.8 583,327.2 587,327.5 591,327.8 595,328.1 599,328.5 603,328.8 607,329.1 611,329.4 615,329.7 619,330.0 623,330.3 627,330.6 631,330.9 635,331.2 639,331.5 643,331.8 647,332.1 651,332.4 655,332.7 659,332.9 663,333.2 667,333.5 671,333.8 675,334.1 679,334.4 683,334.7 687,335.0 691,335.3 695,335.6 699,336.0 703,336.3 707,336.6 711,336.9 715,337.2 719,337.5 723,337.8 727,338.0 731,338.3 735,338.5 739,338.7 743,338.8 747,339.0 751,339.1 755,339.1 759,339.2 763,339.2 767,339.1 771,339.0 775,338.9 779,338.7 783,338.5 787,338.3 791,338.0 795,337.8 799,337.5 803,337.2 807,336.9 811,336.5 815,336.2 819,335.8 823,335.5 827,335.1 831,334.8 835,334.5 839,334.1 843,333.8 847,333.5 851,333.2 855,333.0 859,332.7 863,332.5 867,332.3 871,332.1 875,331.8 879,331.6 883,331.3 887,331.1 891,330.8 895,330.6 899,330.4 903,330.1 907,329.9 911,329.7 915,329.5 919,329.3 923,329.1 927,328.9 931,328.8 935,328.6 939,328.5 943,328.4 947,328.4 951,328.3 955,328.3 959,328.3 963,328.3 967,328.3 971,328.3 975,328.3 979,328.3 983,328.3 987,328.3 991,328.3 995,328.3 999,328.4 1003,328.4 1007,328.4 1011,328.4 1015,328.4 1019,328.4 1023,328.4 1027,328.4 1031,328.4 1035,328.5 1039,328.5 1043,328.5 1047,328.5 1051,328.5 1055,328.5 1059,328.6 1063,328.6 1067,328.6 1071,328.6 1075,328.6 1079,328.6 1083,328.7 1087,328.7 1091,328.7 1095,328.7 1099,328.7 1103,328.8 1107,328.8 1111,328.8 1115,328.9 1119,328.9 1123,328.9 1127,329.0 1131,329.0 1135,329.1 1139,329.1 1143,329.2 1147,329.2 1151,329.3 1155,329.3 1159,329.4 1163,329.4 1167,329.5 1171,329.5 1175,329.6 1179,329.7 1183,329.7 1187,329.8 1191,329.9 1195,330.0 1199,330.0 1203,330.1 1207,330.2 1211,330.3 1215,330.4 1219,330.5 1223,330.6 1227,330.6 1231,330.7 1235,330.8 1239,330.9 1243,331.0 1247,331.1 1262,331.1 1262,395 560,395"/>
<polygon fill="#36ff00" points="560,330.2 579,330.2 583,330.5 587,330.9 591,331.2 595,331.5 599,331.8 603,332.1 607,332.5 611,332.8 615,333.1 619,333.4 623,333.7 627,334.0 631,334.3 635,334.6 639,334.9 643,335.2 647,335.4 651,335.7 655,336.0 659,336.3 663,336.6 667,336.8 671,337.1 675,337.4 679,337.7 683,338.0 687,338.3 691,338.7 695,339.0 699,339.3 703,339.6 707,339.9 711,340.3 715,340.6 719,340.8 723,341.1 727,341.4 731,341.6 735,341.8 739,342.0 743,342.2 747,342.3 751,342.4 755,342.5 759,342.5 763,342.5 767,342.5 771,342.4 775,342.2 779,342.1 783,341.9 787,341.7 791,341.5 795,341.2 799,340.9 803,340.6 807,340.3 811,340.0 815,339.7 819,339.4 823,339.0 827,338.7 831,338.4 835,338.1 839,337.7 843,337.4 847,337.2 851,336.9 855,336.6 859,336.4 863,336.2 867,336.0 871,335.7 875,335.5 879,335.3 883,335.0 887,334.8 891,334.5 895,334.3 899,334.0 903,333.8 907,333.6 911,333.4 915,333.2 919,333.0 923,332.8 927,332.6 931,332.5 935,332.3 939,332.2 943,332.1 947,332.1 951,332.0 955,332.0 959,332.0 963,332.0 967,332.0 971,332.0 975,332.0 979,332.0 983,332.0 987,332.0 991,332.0 995,332.1 999,332.1 1003,332.1 1007,332.1 1011,332.1 1015,332.1 1019,332.1 1023,332.1 1027,332.1 1031,332.2 1035,332.2 1039,332.2 1043,332.2 1047,332.2 1051,332.2 1055,332.2 1059,332.3 1063,332.3 1067,332.3 1071,332.3 1075,332.3 1079,332.4 1083,332.4 1087,332.4 1091,332.4 1095,332.4 1099,332.5 1103,332.5 1107,332.5 1111,332.5 1115,332.6 1119,332.6 1123,332.6 1127,332.7 1131,332.7 1135,332.8 1139,332.8 1143,332.9 1147,332.9 1151,333.0 1155,333.0 1159,333.1 1163,333.1 1167,333.2 1171,333.3 1175,333.3 1179,333.4 1183,333.5 1187,333.5 1191,333.6 1195,333.7 1199,333.8 1203,333.8 1207,333.9 1211,334.0 1215,334.1 1219,334.2 1223,334.3 1227,334.4 1231,334.5 1235,334.6 1239,334.6 1243,334.8 1247,334.9 1262,334.9 1262,395 560,395"/>
<polygon fill="#6bff00" points="560,334.7 579,334.7 583,335.0 587,335.2 591,335.5 595,335.8 599,336.1 603,336.4 607,336.7 611,337.0 615,337.2 619,337.5 623,337.8 627,338.1 631,338.3 635,338.6 639,338.9 643,339.1 647,339.4 651,339.6 655,339.9 659,340.2 663,340.4 667,340.7 671,340.9 675,341.2 679,341.4 683,341.7 687,342.0 691,342.3 695,342.6 699,342.9 703,343.2 707,343.5 711,343.8 715,344.1 719,344.4 723,344.6 727,344.9 731,345.1 735,345.3 739,345.5 743,345.6 747,345.8 751,345.9 755,345.9 759,345.9 763,345.9 767,345.9 771,345.8 775,345.7 779,345.5 783,345.4 787,345.2 791,344.9 795,344.7 799,344.4 803,344.1 807,343.8 811,343.5 815,343.2 819,342.9 823,342.6 827,342.3 831,342.0 835,341.7 839,341.4 843,341.1 847,340.8 851,340.6 855,340.3 859,340.1 863,339.9 867,339.7 871,339.5 875,339.3 879,339.0 883,338.8 887,338.6 891,338.4 895,338.1 899,337.9 903,337.7 907,337.5 911,337.3 915,337.1 919,336.9 923,336.7 927,336.6 931,336.4 935,336.3 939,336.2 943,336.1 947,336.1 951,336.0 955,336.0 959,336.0 963,336.0 967,336.0 971,336.0 975,336.0 979,336.0 983,336.0 987,336.1 991,336.1 995,336.1 999,336.1 1003,336.1 1007,336.1 1011,336.1 1015,336.1 1019,336.1 1023,336.1 1027,336.1 1031,336.1 1035,336.2 1039,336.2 1043,336.2 1047,336.2 1051,336.2 1055,336.2 1059,336.2 1063,336.2 1067,336.3 1071,336.3 1075,336.3 1079,336.3 1083,336.3 1087,336.3 1091,336.3 1095,336.4 1099,336.4 1103,336.4 1107,336.4 1111,336.4 1115,336.5 1119,336.5 1123,336.6 1127,336.6 1131,336.6 1135,336.7 1139,336.7 1143,336.8 1147,336.8 1151,336.9 1155,336.9 1159,337.0 1163,337.0 1167,337.1 1171,337.2 1175,337.2 1179,337.3 1183,337.3 1187,337.4 1191,337.5 1195,337.5 1199,337.6 1203,337.7 1207,337.7 1211,337.8 1215,337.9 1219,338.0 1223,338.1 1227,338.1 1231,338.2 1235,338.3 1239,338.4 1243,338.5 1247,338.6 1262,338.6 1262,395 560,395"/>
<polygon fill="#a1ff00" points="560,339.1 579,339.1 583,339.4 587,339.6 591,339.9 595,340.1 599,340.4 603,340.6 607,340.9 611,341.1 615,341.4 619,341.6 623,341.9 627,342.1 631,342.4 635,342.6 639,342.8 643,343.1 647,343.3 651,343.6 655,343.8 659,344.0 663,344.2 667,344.5 671,344.7 675,344.9 679,345.2 683,345.5 687,345.7 691,346.0 695,346.3 699,346.6 703,346.9 707,347.1 711,347.4 715,347.7 719,347.9 723,348.2 727,348.4 731,348.6 735,348.8 739,348.9 743,349.1 747,349.2 751,349.3 755,349.4 759,349.4 763,349.4 767,349.3 771,349.2 775,349.1 779,349.0 783,348.8 787,348.6 791,348.4 795,348.2 799,347.9 803,347.6 807,347.4 811,347.1 815,346.8 819,346.5 823,346.2 827,345.9 831,345.6 835,345.3 839,345.0 843,344.7 847,344.5 851,344.2 855,344.0 859,343.8 863,343.6 867,343.4 871,343.2 875,343.0 879,342.8 883,342.6 887,342.4 891,342.2 895,342.0 899,341.8 903,341.6 907,341.4 911,341.2 915,341.0 919,340.9 923,340.7 927,340.6 931,340.4 935,340.3 939,340.2 943,340.2 947,340.1 951,340.1 955,340.1 959,340.1 963,340.1 967,340.1 971,340.1 975,340.1 979,340.1 983,340.1 987,340.1 991,340.1 995,340.1 999,340.1 1003,340.1 1007,340.1 1011,340.1 1015,340.1 1019,340.1 1023,340.1 1027,340.1 1031,340.1 1035,340.1 1039,340.1 1043,340.2 1047,340.2 1051,340.2 1055,340.2 1059,340.2 1063,340.2 1067,340.2 1071,340.2 1075,340.2 1079,340.2 1083,340.2 1087,340.3 1091,340.3 1095,340.3 1099,340.3 1103,340.3 1107,340.3 1111,340.3 1115,340.4 1119,340.4 1123,340.5 1127,340.5 1131,340.6 1135,340.6 1139,340.7 1143,340.7 1147,340.8 1151,340.8 1155,340.8 1159,340.9 1163,340.9 1167,341.0 1171,341.0 1175,341.1 1179,341.2 1183,341.2 1187,341.3 1191,341.3 1195,341.4 1199,341.4 1203,341.5 1207,341.6 1211,341.6 1215,341.7 1219,341.8 1223,341.8 1227,341.9 1231,342.0 1235,342.0 1239,342.1 1243,342.2 1247,342.3 1262,342.3 1262,395 560,395"/>
<polygon fill="#d7ff00" points="560,344.4 579,344.4 583,344.6 587,344.8 591,345.1 595,345.3 599,345.5 603,345.7 607,345.9 611,346.2 615,346.4 619,346.6 623,346.8 627,347.0 631,347.2 635,347.5 639,347.7 643,347.9 647,348.1 651,348.3 655,348.5 659,348.7 663,348.9 667,349.1 671,349.3 675,349.6 679,349.8 683,350.0 687,350.3 691,350.5 695,350.8 699,351.1 703,351.3 707,351.6 711,351.8 715,352.1 719,352.3 723,352.5 727,352.7 731,352.9 735,353.1 739,353.3 743,353.4 747,353.5 751,353.6 755,353.6 759,353.7 763,353.6 767,353.6 771,353.5 775,353.4 779,353.3 783,353.1 787,352.9 791,352.7 795,352.5 799,352.2 803,352.0 807,351.7 811,351.4 815,351.2 819,350.9 823,350.6 827,350.3 831,350.0 835,349.7 839,349.5 843,349.2 847,349.0 851,348.8 855,348.5 859,348.4 863,348.2 867,348.0 871,347.8 875,347.6 879,347.4 883,347.2 887,347.1 891,346.9 895,346.7 899,346.5 903,346.3 907,346.1 911,346.0 915,345.8 919,345.6 923,345.5 927,345.4 931,345.3 935,345.2 939,345.1 943,345.0 947,345.0 951,344.9 955,344.9 959,344.9 963,344.9 967,344.9 971,344.9 975,344.9 979,344.9 983,344.9 987,344.9 991,344.9 995,344.9 999,344.9 1003,344.9 1007,344.9 1011,344.9 1015,344.9 1019,344.9 1023,345.0 1027,345.0 1031,345.0 1035,345.0 1039,345.0 1043,345.0 1047,345.0 1051,345.0 1055,345.0 1059,345.0 1063,345.0 1067,345.0 1071,345.0 1075,345.0 1079,345.0 1083,345.0 1087,345.0 1091,345.0 1095,345.0 1099,345.0 1103,345.1 1107,345.1 1111,345.1 1115,345.1 1119,345.2 1123,345.2 1127,345.3 1131,345.3 1135,345.4 1139,345.4 1143,345.5 1147,345.5 1151,345.6 1155,345.6 1159,345.6 1163,345.7 1167,345.7 1171,345.8 1175,345.8 1179,345.9 1183,345.9 1187,346.0 1191,346.0 1195,346.1 1199,346.1 1203,346.2 1207,346.2 1211,346.3 1215,346.4 1219,346.4 1223,346.5 1227,346.5 1231,346.6 1235,346.6 1239,346.7 1243,346.8 1247,346.8 1262,346.8 1262,395 560,395"/>
<polygon fill="#fff200" points="560,349.7 579,349.7 583,349.9 587,350.1 591,350.3 595,350.4 599,350.6 603,350.8 607,351.0 611,351.2 615,351.4 619,351.6 623,351.8 627,351.9 631,352.1 635,352.3 639,352.5 643,352.7 647,352.9 651,353.1 655,353.2 659,353.4 663,353.6 667,353.8 671,354.0 675,354.2 679,354.4 683,354.6 687,354.8 691,355.1 695,355.3 699,355.5 703,355.8 707,356.0 711,356.2 715,356.5 719,356.7 723,356.9 727,357.1 731,357.3 735,357.4 739,357.6 743,357.7 747,357.8 751,357.9 755,357.9 759,357.9 763,357.9 767,357.9 771,357.8 775,357.7 779,357.6 783,357.4 787,357.2 791,357.0 795,356.8 799,356.6 803,356.3 807,356.1 811,355.8 815,355.6 819,355.3 823,355.0 827,354.7 831,354.5 835,354.2 839,354.0 843,353.7 847,353.5 851,353.3 855,353.1 859,352.9 863,352.7 867,352.6 871,352.4 875,352.2 879,352.1 883,351.9 887,351.7 891,351.5 895,351.4 899,351.2 903,351.0 907,350.9 911,350.7 915,350.6 919,350.4 923,350.3 927,350.2 931,350.1 935,350.0 939,349.9 943,349.9 947,349.8 951,349.8 955,349.8 959,349.8 963,349.8 967,349.8 971,349.8 975,349.8 979,349.8 983,349.8 987,349.8 991,349.8 995,349.8 999,349.8 1003,349.8 1007,349.8 1011,349.8 1015,349.8 1019,349.8 1023,349.8 1027,349.8 1031,349.8 1035,349.8 1039,349.8 1043,349.8 1047,349.8 1051,349.8 1055,349.8 1059,349.8 1063,349.8 1067,349.8 1071,349.8 1075,349.8 1079,349.8 1083,349.8 1087,349.8 1091,349.8 1095,349.8 1099,349.8 1103,349.8 1107,349.8 1111,349.9 1115,349.9 1119,349.9 1123,350.0 1127,350.0 1131,350.1 1135,350.1 1139,350.2 1143,350.2 1147,350.3 1151,350.3 1155,350.4 1159,350.4 1163,350.4 1167,350.5 1171,350.5 1175,350.6 1179,350.6 1183,350.7 1187,350.7 1191,350.7 1195,350.8 1199,350.8 1203,350.9 1207,350.9 1211,351.0 1215,351.0 1219,351.0 1223,351.1 1227,351.1 1231,351.2 1235,351.2 1239,351.3 1243,351.3 1247,351.4 1262,351.4 1262,395 560,395"/>
<polygon fill="#ffbc00" points="560,355.0 579,355.0 583,355.2 587,355.4 591,355.6 595,355.8 599,356.0 603,356.2 607,356.4 611,356.6 615,356.8 619,357.0 623,357.2 627,357.4 631,357.6 635,357.8 639,358.0 643,358.2 647,358.4 651,358.6 655,358.8 659,358.9 663,359.1 667,359.3 671,359.5 675,359.7 679,359.9 683,360.1 687,360.3 691,360.6 695,360.8 699,361.0 703,361.3 707,361.5 711,361.7 715,361.9 719,362.1 723,362.3 727,362.5 731,362.7 735,362.9 739,363.0 743,363.1 747,363.2 751,363.3 755,363.3 759,363.4 763,363.3 767,363.3 771,363.2 775,363.1 779,363.0 783,362.9 787,362.7 791,362.5 795,362.3 799,362.1 803,361.9 807,361.6 811,361.4 815,361.1 819,360.9 823,360.6 827,360.3 831,360.1 835,359.8 839,359.6 843,359.4 847,359.1 851,358.9 855,358.7 859,358.6 863,358.4 867,358.2 871,358.1 875,357.9 879,357.7 883,357.5 887,357.3 891,357.2 895,357.0 899,356.8 903,356.6 907,356.5 911,356.3 915,356.1 919,356.0 923,355.8 927,355.7 931,355.6 935,355.5 939,355.4 943,355.4 947,355.3 951,355.3 955,355.3 959,355.3 963,355.3 967,355.3 971,355.3 975,355.3 979,355.3 983,355.3 987,355.3 991,355.3 995,355.3 999,355.3 1003,355.3 1007,355.3 1011,355.3 1015,355.3 1019,355.3 1023,355.3 1027,355.3 1031,355.3 1035,355.3 1039,355.3 1043,355.3 1047,355.3 1051,355.3 1055,355.3 1059,355.3 1063,355.3 1067,355.3 1071,355.3 1075,355.3 1079,355.3 1083,355.3 1087,355.3 1091,355.3 1095,355.3 1099,355.3 1103,355.3 1107,355.3 1111,355.3 1115,355.4 1119,355.4 1123,355.5 1127,355.6 1131,355.6 1135,355.7 1139,355.8 1143,355.8 1147,355.9 1151,356.0 1155,356.0 1159,356.1 1163,356.1 1167,356.2 1171,356.2 1175,356.3 1179,356.4 1183,356.4 1187,356.5 1191,356.5 1195,356.6 1199,356.7 1203,356.7 1207,356.8 1211,356.8 1215,356.9 1219,357.0 1223,357.0 1227,357.1 1231,357.1 1235,357.2 1239,357.3 1243,357.3 1247,357.4 1262,357.4 1262,395 560,395"/>
<polygon fill="#ff8600" points="560,360.3 579,360.3 583,360.6 587,360.8 591,361.0 595,361.3 599,361.5 603,361.7 607,362.0 611,362.2 615,362.4 619,362.6 623,362.9 627,363.1 631,363.3 635,363.5 639,363.7 643,363.9 647,364.1 651,364.3 655,364.5 659,364.7 663,364.9 667,365.1 671,365.3 675,365.5 679,365.7 683,366.0 687,366.2 691,366.4 695,366.6 699,366.9 703,367.1 707,367.3 711,367.6 715,367.8 719,368.0 723,368.2 727,368.4 731,368.5 735,368.7 739,368.8 743,368.9 747,369.0 751,369.1 755,369.1 759,369.2 763,369.2 767,369.1 771,369.1 775,369.0 779,368.8 783,368.7 787,368.6 791,368.4 795,368.2 799,368.0 803,367.8 807,367.6 811,367.3 815,367.1 819,366.8 823,366.6 827,366.3 831,366.1 835,365.9 839,365.6 843,365.4 847,365.2 851,365.0 855,364.8 859,364.6 863,364.5 867,364.3 871,364.1 875,363.9 879,363.7 883,363.5 887,363.3 891,363.1 895,362.9 899,362.7 903,362.5 907,362.3 911,362.1 915,361.9 919,361.8 923,361.6 927,361.5 931,361.4 935,361.2 939,361.1 943,361.1 947,361.0 951,361.0 955,361.0 959,361.0 963,361.0 967,361.0 971,361.0 975,361.0 979,361.0 983,361.0 987,361.0 991,361.0 995,361.0 999,361.0 1003,361.0 1007,361.0 1011,361.0 1015,361.0 1019,361.0 1023,361.0 1027,361.0 1031,361.0 1035,361.0 1039,361.0 1043,361.0 1047,361.0 1051,361.0 1055,361.0 1059,361.0 1063,361.0 1067,361.0 1071,361.0 1075,361.0 1079,361.0 1083,361.0 1087,361.0 1091,361.0 1095,361.0 1099,361.0 1103,361.0 1107,361.0 1111,361.0 1115,361.1 1119,361.2 1123,361.2 1127,361.3 1131,361.4 1135,361.5 1139,361.6 1143,361.7 1147,361.8 1151,361.9 1155,362.0 1159,362.0 1163,362.1 1167,362.2 1171,362.3 1175,362.4 1179,362.4 1183,362.5 1187,362.6 1191,362.7 1195,362.8 1199,362.9 1203,362.9 1207,363.0 1211,363.1 1215,363.2 1219,363.3 1223,363.4 1227,363.5 1231,363.5 1235,363.6 1239,363.7 1243,363.8 1247,363.9 1262,363.9 1262,395 560,395"/>
<polygon fill="#ff5100" points="560,365.0 579,365.0 583,365.3 587,365.5 591,365.8 595,366.1 599,366.3 603,366.6 607,366.8 611,367.1 615,367.3 619,367.6 623,367.8 627,368.1 631,368.3 635,368.5 639,368.8 643,369.0 647,369.2 651,369.4 655,369.6 659,369.8 663,370.0 667,370.2 671,370.5 675,370.7 679,370.9 683,371.1 687,371.3 691,371.6 695,371.8 699,372.0 703,372.3 707,372.5 711,372.7 715,372.9 719,373.1 723,373.3 727,373.5 731,373.7 735,373.8 739,374.0 743,374.1 747,374.2 751,374.2 755,374.3 759,374.3 763,374.3 767,374.3 771,374.2 775,374.1 779,374.0 783,373.9 787,373.7 791,373.6 795,373.4 799,373.2 803,373.0 807,372.8 811,372.6 815,372.4 819,372.1 823,371.9 827,371.7 831,371.4 835,371.2 839,371.0 843,370.8 847,370.6 851,370.4 855,370.2 859,370.0 863,369.8 867,369.6 871,369.4 875,369.2 879,369.0 883,368.8 887,368.6 891,368.4 895,368.1 899,367.9 903,367.7 907,367.5 911,367.3 915,367.1 919,366.9 923,366.7 927,366.6 931,366.4 935,366.3 939,366.2 943,366.1 947,366.0 951,366.0 955,366.0 959,366.0 963,366.0 967,366.0 971,366.0 975,366.0 979,366.0 983,366.0 987,366.0 991,366.0 995,366.0 999,366.0 1003,366.0 1007,366.0 1011,366.0 1015,366.0 1019,366.0 1023,366.0 1027,366.0 1031,366.0 1035,366.0 1039,366.0 1043,366.0 1047,366.0 1051,366.0 1055,366.0 1059,366.0 1063,366.0 1067,366.0 1071,366.0 1075,366.0 1079,366.0 1083,366.0 1087,366.0 1091,366.0 1095,366.0 1099,366.0 1103,366.0 1107,366.0 1111,366.1 1115,366.1 1119,366.2 1123,366.3 1127,366.5 1131,366.6 1135,366.7 1139,366.8 1143,366.9 1147,367.0 1151,367.1 1155,367.2 1159,367.3 1163,367.4 1167,367.5 1171,367.6 1175,367.8 1179,367.9 1183,368.0 1187,368.1 1191,368.2 1195,368.3 1199,368.4 1203,368.5 1207,368.6 1211,368.7 1215,368.8 1219,368.9 1223,369.0 1227,369.2 1231,369.3 1235,369.4 1239,369.5 1243,369.6 1247,369.7 1262,369.7 1262,395 560,395"/>
<polygon fill="#ff1b00" points="560,369.7 579,369.7 583,370.0 587,370.3 591,370.6 595,370.8 599,371.1 603,371.4 607,371.7 611,372.0 615,372.2 619,372.5 623,372.8 627,373.0 631,373.3 635,373.5 639,373.8 643,374.0 647,374.3 651,374.5 655,374.7 659,375.0 663,375.2 667,375.4 671,375.6 675,375.8 679,376.0 683,376.3 687,376.5 691,376.7 695,377.0 699,377.2 703,377.4 707,377.7 711,377.9 715,378.1 719,378.3 723,378.5 727,378.7 731,378.8 735,379.0 739,379.1 743,379.2 747,379.3 751,379.4 755,379.4 759,379.4 763,379.4 767,379.4 771,379.3 775,379.3 779,379.2 783,379.1 787,378.9 791,378.8 795,378.6 799,378.4 803,378.3 807,378.1 811,377.9 815,377.6 819,377.4 823,377.2 827,377.0 831,376.8 835,376.6 839,376.3 843,376.1 847,375.9 851,375.7 855,375.5 859,375.4 863,375.2 867,375.0 871,374.8 875,374.6 879,374.3 883,374.1 887,373.9 891,373.6 895,373.4 899,373.1 903,372.9 907,372.7 911,372.4 915,372.2 919,372.0 923,371.8 927,371.6 931,371.5 935,371.3 939,371.2 943,371.1 947,371.1 951,371.0 955,371.0 959,371.0 963,371.0 967,371.0 971,371.0 975,371.0 979,371.0 983,371.0 987,371.0 991,371.0 995,371.0 999,371.0 1003,371.0 1007,371.0 1011,371.0 1015,371.0 1019,371.0 1023,371.0 1027,371.0 1031,371.0 1035,371.0 1039,371.0 1043,371.0 1047,371.0 1051,371.0 1055,371.0 1059,371.0 1063,371.0 1067,371.0 1071,371.0 1075,371.0 1079,371.0 1083,371.0 1087,371.0 1091,371.0 1095,371.0 1099,371.0 1103,371.0 1107,371.0 1111,371.1 1115,371.2 1119,371.3 1123,371.4 1127,371.6 1131,371.7 1135,371.9 1139,372.0 1143,372.1 1147,372.3 1151,372.4 1155,372.5 1159,372.6 1163,372.8 1167,372.9 1171,373.0 1175,373.1 1179,373.3 1183,373.4 1187,373.5 1191,373.6 1195,373.8 1199,373.9 1203,374.0 1207,374.2 1211,374.3 1215,374.4 1219,374.6 1223,374.7 1227,374.9 1231,375.0 1235,375.1 1239,375.3 1243,375.4 1247,375.6 1262,375.6 1262,395 560,395"/>
</g></g>
<rect x="579.5" y="237.5" width="666" height="134" fill="none" stroke="#000" stroke-width="1"/>
<rect x="579" y="293" width="1" height="1" fill="#e8e8c8" opacity=".8"/>
<rect x="579" y="317" width="1" height="1" fill="#e8e8c8" opacity=".8"/>
<rect x="579" y="326" width="1" height="1" fill="#e8e8c8" opacity=".8"/>
<rect x="579" y="336" width="1" height="1" fill="#e8e8c8" opacity=".8"/>
<rect x="579" y="344" width="1" height="1" fill="#e8e8c8" opacity=".8"/>
<rect x="579" y="366" width="1" height="1" fill="#e8e8c8" opacity=".8"/>
<rect x="1245" y="317" width="1" height="1" fill="#e8e8c8" opacity=".8"/>
<rect x="1245" y="339" width="1" height="1" fill="#e8e8c8" opacity=".8"/>
<rect x="1245" y="362" width="1" height="1" fill="#e8e8c8" opacity=".8"/>
<rect x="706" y="371" width="1" height="1" fill="#f0f0c0" opacity=".9"/>
<rect x="796" y="371" width="1" height="1" fill="#f0f0c0" opacity=".9"/>
<text x="1249" y="74" font-size="31" font-weight="bold" fill="#fff" textLength="84.5" lengthAdjust="spacingAndGlyphs">ANSYS</text>
<text x="1287.6" y="92" font-size="17" fill="#fff" textLength="44" lengthAdjust="spacingAndGlyphs">R18.1</text>
<text x="777" y="530.5" font-size="12.5" fill="#08081e">0</text>
<text x="893.5" y="530.5" font-size="12.5" fill="#08081e">20.000</text>
<text x="1016.5" y="530.5" font-size="12.5" fill="#08081e">40.00</text>
<text x="1055.5" y="530.5" font-size="12.5" fill="#08081e">(m)</text>
<rect x="779" y="536" width="267" height="4" fill="#fff"/>
<rect x="779" y="536" width="67" height="4" fill="#000"/>
<rect x="912" y="536" width="67" height="4" fill="#000"/>
<rect x="779.5" y="536.5" width="266.5" height="4" fill="none" stroke="#000"/>
<text x="1291.5" y="480.8" font-size="12.5" fill="#1f9a1f">Y</text>
<path d="M1290 529 V499" stroke="#22a022" stroke-width="2.2"/>
<path d="M1290 492.5 L1294 501 H1286Z" fill="#22a022"/>
<path d="M1291 530.5 H1321" stroke="#d01818" stroke-width="2.2"/>
<path d="M1328 530.5 L1319.5 526.8 V534.2Z" fill="#d01818"/>
<text x="1292.8" y="526.6" font-size="11.5" fill="#191970">Z</text>
<circle cx="1290" cy="530.5" r="4" fill="#0a0aa8"/>
<circle cx="1309.3" cy="510.6" r="3.6" fill="#19c8d0"/>
</svg>
<div class="abs" style="left:473px;top:0px;width:1px;height:3px;background:#b8b8b8"></div>
<div class="abs" style="left:494px;top:1px;width:5px;height:1px;background:#222;opacity:.4"></div>
<div class="abs" style="left:494px;top:0px;width:5px;height:1px;background:#222"></div>
<div class="abs" style="left:504px;top:0px;width:1px;height:5px;background:#c8c8c8"></div>
<div class="abs" style="left:514px;top:-2px;width:23px;height:5px;background:#cce4f7;border:1px solid #8cc0ee"></div>
<div class="abs" style="left:523px;top:1px;width:6px;height:1px;background:#222;opacity:.4"></div>
<div class="abs" style="left:523px;top:0px;width:6px;height:1px;background:#222"></div>
<div class="abs" style="left:577px;top:1px;width:3px;height:1px;background:#222;opacity:.4"></div>
<div class="abs" style="left:577px;top:0px;width:3px;height:1px;background:#222"></div>
<div class="abs" style="left:600px;top:1px;width:3px;height:1px;background:#222;opacity:.4"></div>
<div class="abs" style="left:600px;top:0px;width:3px;height:1px;background:#222"></div>
<div class="abs" style="left:623px;top:1px;width:3px;height:1px;background:#222;opacity:.4"></div>
<div class="abs" style="left:623px;top:0px;width:3px;height:1px;background:#222"></div>
<div class="abs" style="left:632px;top:0px;width:1px;height:4px;background:#c8c8c8"></div>
<div class="abs" style="left:637px;top:1px;width:3px;height:1px;background:#2a8a2a;opacity:.4"></div>
<div class="abs" style="left:637px;top:0px;width:3px;height:1px;background:#2a8a2a"></div>
<div class="abs" style="left:641px;top:1px;width:3px;height:1px;background:#2a8a2a;opacity:.4"></div>
<div class="abs" style="left:641px;top:0px;width:3px;height:1px;background:#2a8a2a"></div>
<div class="abs" style="left:645px;top:1px;width:3px;height:1px;background:#2a8a2a;opacity:.4"></div>
<div class="abs" style="left:645px;top:0px;width:3px;height:1px;background:#2a8a2a"></div>
<div class="abs" style="left:660px;top:0px;width:1px;height:4px;background:#c8c8c8"></div>
<div class="abs" style="left:699px;top:0px;width:1px;height:6px;background:#c0c0c0"></div>
<div class="abs" style="left:704px;top:0px;width:1px;height:3px;background:#b8b8b8"></div>
<!--VIEWER-END-->

</body>
</html>
